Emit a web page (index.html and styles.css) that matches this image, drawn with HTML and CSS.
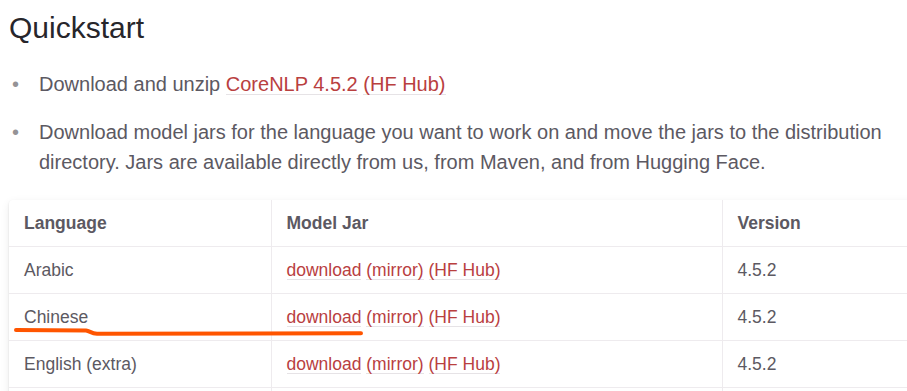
FILE: index.html
```html
<!DOCTYPE html>
<html lang="en">
<head>
<meta charset="utf-8">
<title>Quickstart</title>
<link rel="stylesheet" href="styles.css">
</head>
<body>
<div class="page">
  <h1 class="title">Quickstart</h1>
  <ul class="steps">
    <li>Download and unzip <a href="#">CoreNLP 4.5.2</a> <a href="#">(HF Hub)</a></li>
    <li>Download model jars for the language you want to work on and move the jars to the distribution directory. Jars are available directly from us, from Maven, and from Hugging Face.</li>
  </ul>
  <div class="table-wrapper">
    <table class="models">
      <colgroup>
        <col class="c1"><col class="c2"><col class="c3">
      </colgroup>
      <thead>
        <tr><th>Language</th><th>Model Jar</th><th>Version</th></tr>
      </thead>
      <tbody>
        <tr><td>Arabic</td><td><a href="#">download</a> <a href="#">(mirror)</a> <a href="#">(HF Hub)</a></td><td>4.5.2</td></tr>
        <tr><td>Chinese</td><td><a href="#">download</a> <a href="#">(mirror)</a> <a href="#">(HF Hub)</a></td><td>4.5.2</td></tr>
        <tr><td>English (extra)</td><td><a href="#">download</a> <a href="#">(mirror)</a> <a href="#">(HF Hub)</a></td><td>4.5.2</td></tr>
        <tr class="more"><td></td><td></td><td></td></tr>
      </tbody>
    </table>
  </div>
  <svg class="scribble" width="380" height="20" viewBox="0 0 380 20" aria-hidden="true">
    <path d="M16 5 L86 5.5 C90 6 91 8.5 97 8.8 L361 8.2" fill="none" stroke="#ff5500" stroke-width="4" stroke-linecap="round" stroke-linejoin="round"/>
  </svg>
</div>
</body>
</html>
```
FILE: styles.css
```css
html, body {
  margin: 0;
  padding: 0;
  overflow: hidden;
  background: #ffffff;
}
body {
  font-family: "Liberation Sans", Arial, sans-serif;
  color: #5c5962;
}
.page {
  position: relative;
  width: 907px;
  height: 391px;
  overflow: hidden;
  padding: 9px 0 0 9px;
  box-sizing: border-box;
}
.title {
  margin: 0;
  font-size: 30px;
  line-height: 37px;
  font-weight: 400;
  color: #27262b;
}
.steps {
  list-style: none;
  margin: 23px 0 0;
  padding: 0 0 0 30px;
  font-size: 20px;
  line-height: 30px;
}
.steps li {
  position: relative;
}
.steps li + li {
  margin-top: 18px;
}
.steps li::before {
  content: "•";
  position: absolute;
  left: -27px;
  color: #959396;
}
a {
  color: #b9403f;
  text-decoration: none;
  background-image: linear-gradient(#e6e3e6, #e6e3e6);
  background-repeat: no-repeat;
  background-size: 100% 1px;
  background-position: 0 100%;
}
.table-wrapper {
  margin-top: 23px;
  width: 1000px;
  border-radius: 4px;
  box-shadow: 0 1px 2px rgba(0,0,0,0.12), 0 3px 10px rgba(0,0,0,0.08);
  background: #fff;
}
.models {
  border-collapse: collapse;
  table-layout: fixed;
  width: 100%;
}
.c1 { width: 262px; }
.c2 { width: 451px; }
.models th,
.models td {
  font-size: 17.5px;
  line-height: 26px;
  padding: 10px 15px;
  text-align: left;
  border-bottom: 1px solid #eeebee;
  white-space: nowrap;
}
.models th + th,
.models td + td {
  border-left: 1px solid #eeebee;
}
.models th {
  font-weight: 700;
  color: #5c5962;
}
.models .more td {
  height: 26px;
}
.scribble {
  position: absolute;
  left: 0;
  top: 325px;
}
```
